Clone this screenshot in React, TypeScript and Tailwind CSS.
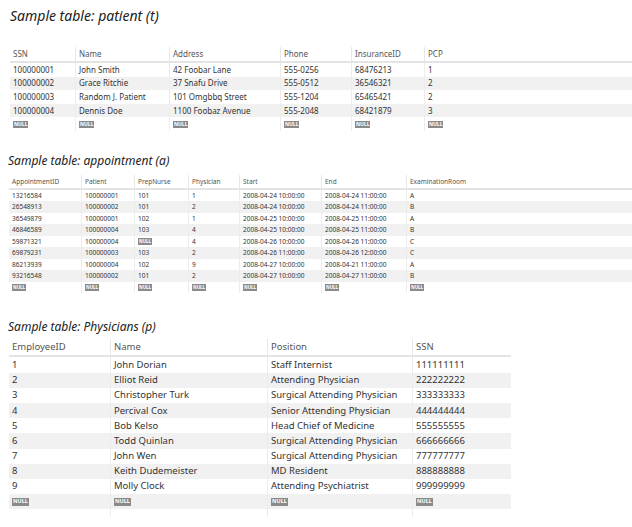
import React from "react";

type TableProps = {
    cols: string[];
    widths: number[];
    rows: string[][];
    rowH: string;
    headH: string;
    text: string;
    nullCls: string;
    tail?: boolean;
};

function Null({ cls }: { cls: string }) {
    return <span className={`inline-block bg-[#8a8a8a] text-white font-bold leading-none px-[1px] ${cls}`}>NULL</span>;
}

function DataTable({ cols, widths, rows, rowH, headH, text, nullCls, tail }: TableProps) {
    const all = [...rows, cols.map(() => "NULL")];
    return (
        <div className={`[font-family:'Liberation_Sans',Arial,sans-serif] text-[#333] ${text}`}>
            <div className={`flex border-b-2 border-[#e4e4e4] text-[#555] ${headH}`}>
                {cols.map((c, i) => (
                    <div key={c} style={{ width: widths[i] }} className="flex items-center px-[3px] border-r border-[#e8e8e8] last:border-r-0">
                        {c}
                    </div>
                ))}
            </div>
            {all.map((r, ri) => (
                <div key={ri} className={`flex ${rowH} ${ri % 2 === 1 ? "bg-[#f1f1f1]" : "bg-white"}`}>
                    {r.map((v, ci) => (
                        <div key={ci} style={{ width: widths[ci] }} className="flex items-center px-[3px] border-r border-[#ececec] last:border-r-0">
                            {v === "NULL" ? <Null cls={nullCls} /> : v}
                        </div>
                    ))}
                </div>
            ))}
            {tail && (
                <div className="flex h-[8px]">
                    {cols.map((c, i) => (
                        <div key={c} style={{ width: widths[i] }} className="border-r border-[#ececec] last:border-r-0" />
                    ))}
                </div>
            )}
        </div>
    );
}

const patients = [
    ["100000001", "John Smith", "42 Foobar Lane", "555-0256", "68476213", "1"],
    ["100000002", "Grace Ritchie", "37 Snafu Drive", "555-0512", "36546321", "2"],
    ["100000003", "Random J. Patient", "101 Omgbbq Street", "555-1204", "65465421", "2"],
    ["100000004", "Dennis Doe", "1100 Foobaz Avenue", "555-2048", "68421879", "3"],
];

const appointments = [
    ["13216584", "100000001", "101", "1", "2008-04-24 10:00:00", "2008-04-24 11:00:00", "A"],
    ["26548913", "100000002", "101", "2", "2008-04-24 10:00:00", "2008-04-24 11:00:00", "B"],
    ["36549879", "100000001", "102", "1", "2008-04-25 10:00:00", "2008-04-25 11:00:00", "A"],
    ["46846589", "100000004", "103", "4", "2008-04-25 10:00:00", "2008-04-25 11:00:00", "B"],
    ["59871321", "100000004", "NULL", "4", "2008-04-26 10:00:00", "2008-04-26 11:00:00", "C"],
    ["69879231", "100000003", "103", "2", "2008-04-26 11:00:00", "2008-04-26 12:00:00", "C"],
    ["86213939", "100000004", "102", "9", "2008-04-27 10:00:00", "2008-04-21 11:00:00", "A"],
    ["93216548", "100000002", "101", "2", "2008-04-27 10:00:00", "2008-04-27 11:00:00", "B"],
];

const physicians = [
    ["1", "John Dorian", "Staff Internist", "111111111"],
    ["2", "Elliot Reid", "Attending Physician", "222222222"],
    ["3", "Christopher Turk", "Surgical Attending Physician", "333333333"],
    ["4", "Percival Cox", "Senior Attending Physician", "444444444"],
    ["5", "Bob Kelso", "Head Chief of Medicine", "555555555"],
    ["6", "Todd Quinlan", "Surgical Attending Physician", "666666666"],
    ["7", "John Wen", "Surgical Attending Physician", "777777777"],
    ["8", "Keith Dudemeister", "MD Resident", "888888888"],
    ["9", "Molly Clock", "Attending Psychiatrist", "999999999"],
];

export default function App() {
    return (
        <div className="w-[632px] h-[527px] bg-white overflow-hidden">
            <div className="pt-[5px] pl-[10px] text-[14px] italic text-[#222] [font-family:'Liberation_Sans',Arial,sans-serif]">
                Sample table: patient (t)
            </div>
            <div className="mt-[21px] ml-[10px]">
                <DataTable
                    cols={["SSN", "Name", "Address", "Phone", "InsuranceID", "PCP"]}
                    widths={[66, 94, 111, 71, 73, 35]}
                    rows={patients}
                    rowH="h-[13.6px]"
                    headH="h-[16px]"
                    text="text-[8px]"
                    nullCls="text-[5px] py-[1px]"
                />
            </div>
            <div className="mt-[21px] pl-[8px] text-[12px] italic text-[#222] font-['Open_Sans']">
                Sample table: appointment (a)
            </div>
            <div className="mt-[5px] ml-[9px]">
                <DataTable
                    cols={["AppointmentID", "Patient", "PrepNurse", "Physician", "Start", "End", "ExaminationRoom"]}
                    widths={[73, 53, 54, 51, 82, 85, 74]}
                    rows={appointments}
                    rowH="h-[11.5px]"
                    headH="h-[15px]"
                    text="text-[6.5px]"
                    nullCls="text-[4.5px] py-[1px]"
                />
            </div>
            <div className="mt-[25px] pl-[8px] text-[12px] italic text-[#222] font-['Open_Sans']">
                Sample table: Physicians (p)
            </div>
            <div className="mt-[3px] ml-[9px] w-[502px]">
                <DataTable
                    cols={["EmployeeID", "Name", "Position", "SSN"]}
                    widths={[102, 157, 145, 98]}
                    rows={physicians}
                    rowH="h-[15.2px]"
                    headH="h-[18px]"
                    text="text-[9.5px]"
                    nullCls="text-[5.5px] py-[1px]"
                    tail
                />
            </div>
        </div>
    );
}
